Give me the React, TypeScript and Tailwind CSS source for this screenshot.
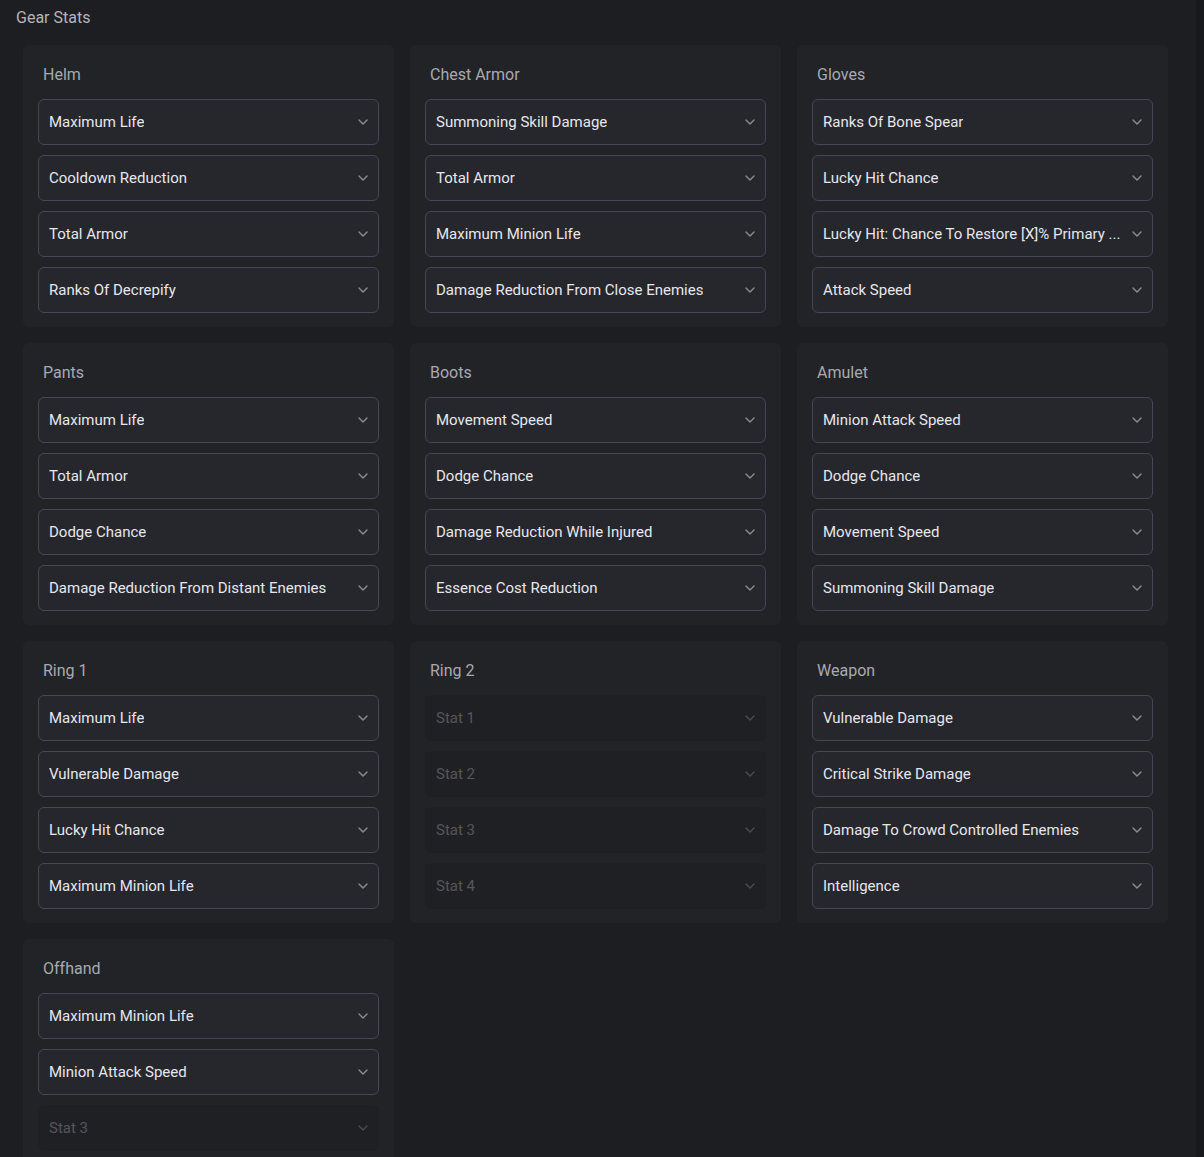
type Slot = {
  name: string;
  stats: (string | null)[];
};

const slots: Slot[] = [
  { name: 'Helm', stats: ['Maximum Life', 'Cooldown Reduction', 'Total Armor', 'Ranks Of Decrepify'] },
  { name: 'Chest Armor', stats: ['Summoning Skill Damage', 'Total Armor', 'Maximum Minion Life', 'Damage Reduction From Close Enemies'] },
  { name: 'Gloves', stats: ['Ranks Of Bone Spear', 'Lucky Hit Chance', 'Lucky Hit: Chance To Restore [X]% Primary ...', 'Attack Speed'] },
  { name: 'Pants', stats: ['Maximum Life', 'Total Armor', 'Dodge Chance', 'Damage Reduction From Distant Enemies'] },
  { name: 'Boots', stats: ['Movement Speed', 'Dodge Chance', 'Damage Reduction While Injured', 'Essence Cost Reduction'] },
  { name: 'Amulet', stats: ['Minion Attack Speed', 'Dodge Chance', 'Movement Speed', 'Summoning Skill Damage'] },
  { name: 'Ring 1', stats: ['Maximum Life', 'Vulnerable Damage', 'Lucky Hit Chance', 'Maximum Minion Life'] },
  { name: 'Ring 2', stats: [null, null, null, null] },
  { name: 'Weapon', stats: ['Vulnerable Damage', 'Critical Strike Damage', 'Damage To Crowd Controlled Enemies', 'Intelligence'] },
  { name: 'Offhand', stats: ['Maximum Minion Life', 'Minion Attack Speed', null, null] },
];

function Chevron({ className }: { className: string }) {
  return (
    <svg width="10" height="6" viewBox="0 0 10 6" fill="none" className={className}>
      <path d="M1 1l4 4 4-4" stroke="currentColor" strokeWidth="1.4" strokeLinecap="round" strokeLinejoin="round" />
    </svg>
  );
}

function StatSelect({ value, index }: { value: string | null; index: number }) {
  if (value === null) {
    return (
      <div className="h-[46px] rounded-md border border-[#1f2024] bg-[#1f2024] pl-[10px] pr-[10px] flex items-center justify-between gap-2">
        <span className="text-[15px] text-[#55565c]">Stat {index + 1}</span>
        <Chevron className="text-[#4b4c52] shrink-0" />
      </div>
    );
  }
  return (
    <div className="h-[46px] rounded-md border border-[#46465a] bg-[#26272c] pl-[10px] pr-[10px] flex items-center justify-between gap-2">
      <span className="min-w-0 truncate text-[15px] text-[#e6e6ec]">{value}</span>
      <Chevron className="text-[#8c8c94] shrink-0" />
    </div>
  );
}

function SlotCard({ slot }: { slot: Slot }) {
  return (
    <div className="rounded-md bg-[#222327] px-[15px] pt-[16px] pb-[14px]">
      <div className="pl-[5px] text-[16px] leading-[28px] text-[#a9a9b1] mb-[10px]">{slot.name}</div>
      <div className="flex flex-col gap-[10px]">
        {slot.stats.map((s, i) => (
          <StatSelect key={i} value={s} index={i} />
        ))}
      </div>
    </div>
  );
}

export default function App() {
  return (
    <div className="h-screen overflow-hidden flex bg-[#1d1e22] font-['Roboto',sans-serif]">
      <div className="flex-1 pl-4 pt-[6px]">
        <h2 className="text-[16px] leading-[24px] text-[#b4b4bb]">Gear Stats</h2>
        <div className="mt-[15px] ml-[7px] w-[1145px] grid grid-cols-3 gap-4">
          {slots.map((slot) => (
            <SlotCard key={slot.name} slot={slot} />
          ))}
        </div>
      </div>
      <div className="w-2 bg-[#18191c]" />
    </div>
  );
}
